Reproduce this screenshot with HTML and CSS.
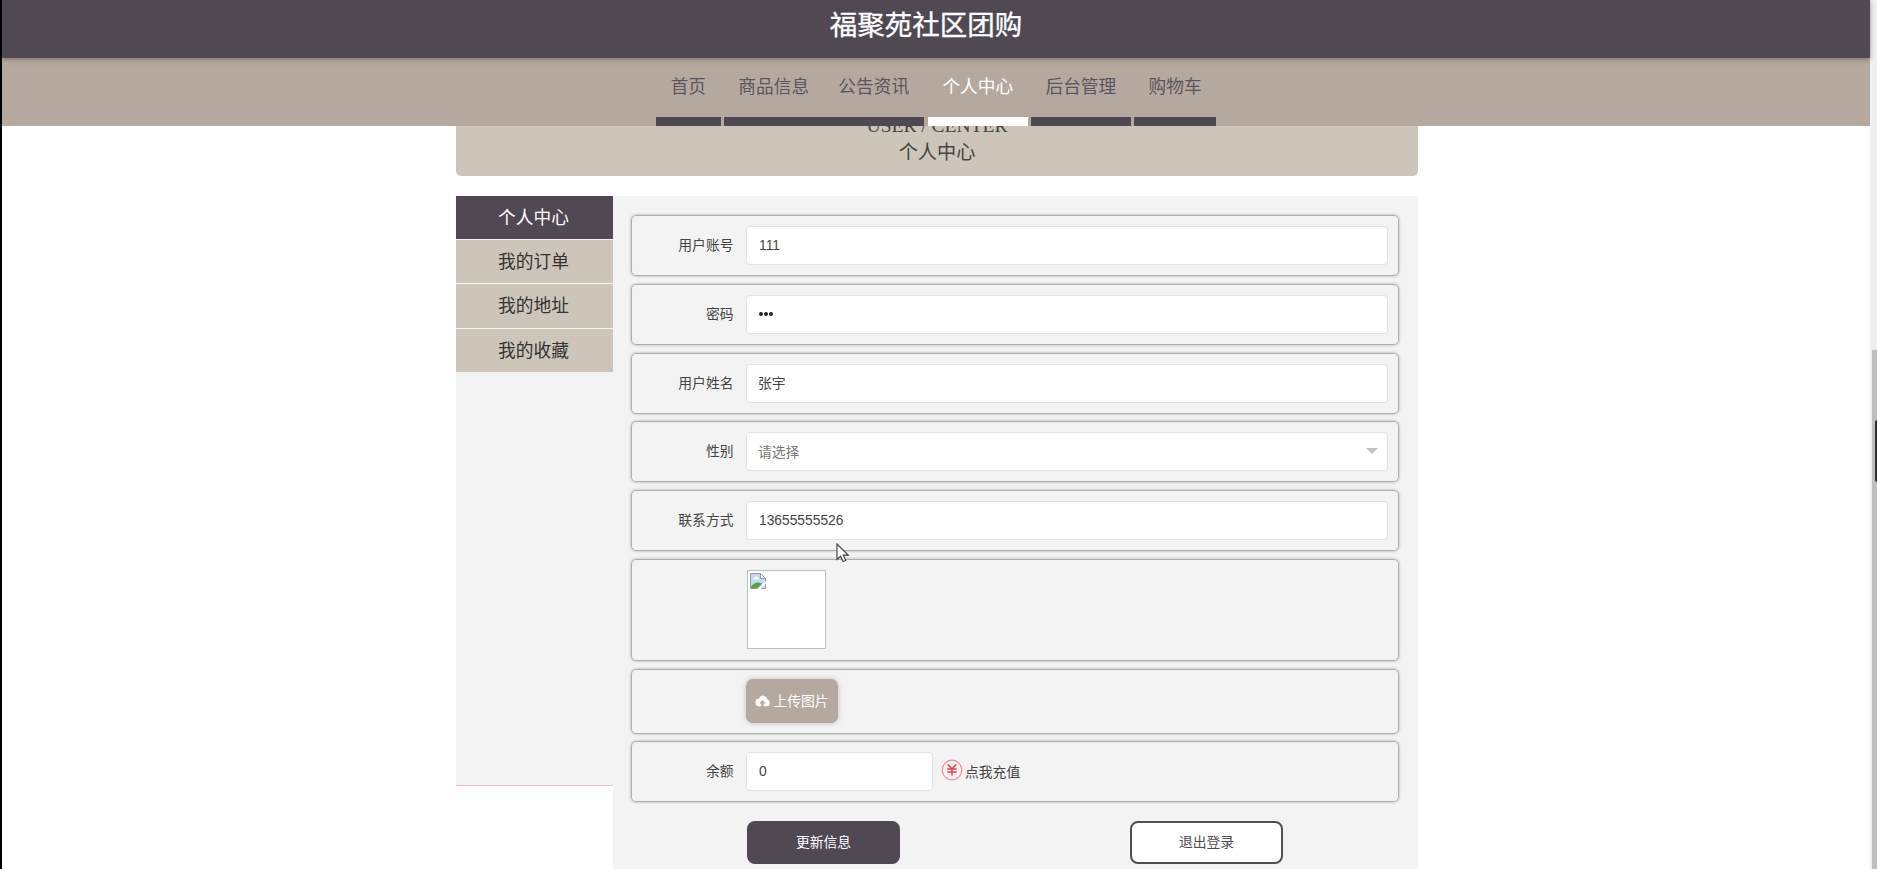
FILE: index.html
```html
<!DOCTYPE html>
<html lang="zh-CN">
<head>
<meta charset="utf-8">
<title>福聚苑社区团购</title>
<link rel="stylesheet" href="styles.css">
</head>
<body>
<div class="window">
  <div class="page">
    <header class="header">福聚苑社区团购</header>
    <nav class="nav">
      <a class="nav-item">首页</a>
      <a class="nav-item">商品信息</a>
      <a class="nav-item joined">公告资讯</a>
      <a class="nav-item active">个人中心</a>
      <a class="nav-item">后台管理</a>
      <a class="nav-item">购物车</a>
    </nav>
    <div class="banner">
      <div class="banner-en">USER / CENTER</div>
      <div class="banner-zh">个人中心</div>
    </div>
    <main class="center">
      <aside class="side">
        <a class="side-item current">个人中心</a>
        <a class="side-item">我的订单</a>
        <a class="side-item">我的地址</a>
        <a class="side-item">我的收藏</a>
      </aside>
      <section class="panel">
        <div class="row"><label class="label">用户账号</label><div class="field">111</div></div>
        <div class="row"><label class="label">密码</label><div class="field dots"><i></i><i></i><i></i></div></div>
        <div class="row"><label class="label">用户姓名</label><div class="field zh">张宇</div></div>
        <div class="row"><label class="label">性别</label><div class="field select zh">请选择<span class="caret"></span></div></div>
        <div class="row"><label class="label">联系方式</label><div class="field">13655555526</div></div>
        <div class="row row-photo"><span class="label"></span>
          <div class="photo">
            <svg width="16" height="16" viewBox="0 0 16 16">
              <path d="M.5.5h10l5 5v10H.5z" fill="#c4d7f5" stroke="#9a9a9a"/>
              <path d="M3 6.2C3 4.8 4.300 4.600 4.700 4.800 5.200 3.100 7.600 3.300 7.700 5 8.900 4.900 9 6.200 8.400 6.200z" fill="#fff"/>
              <path d="M1 15v-1.500C3 11 5.500 9.500 8 9.500c1.500 0 3 .5 4 1.500L8 15z" fill="#55a53c"/>
              <path d="M10.500.5v5h5z" fill="#fff" stroke="#9a9a9a"/>
              <path d="M16 8v2.500L10.500 16H7z" fill="#fff"/>
            </svg>
          </div>
        </div>
        <div class="row row-upload"><span class="label"></span>
          <button class="upload">
            <svg width="15" height="12" viewBox="0 0 15 12"><path d="M12.300 4.600A4.300 4.300 0 0 0 4 3.400 4 4 0 0 0 3.600 11.300H6.300V8.600H4.200L7.500 4.900l3.300 3.700H8.700v2.700h2.900a3.400 3.400 0 0 0 .7-6.700z" fill="#fff"/></svg>
            <span>上传图片</span>
          </button>
        </div>
        <div class="row"><label class="label">余额</label><div class="field short">0</div>
          <svg class="yen" width="22" height="22" viewBox="0 0 22 22" fill="none"><circle cx="11" cy="11" r="9.800" stroke="#f58c8c" stroke-width="1.200"/><path d="M6.800 5.500 11 10l4.200-4.500M6.300 10h9.400M6.300 13h9.400M11 10v6.500" stroke="#e8434d" stroke-width="1.600"/></svg>
          <span class="recharge">点我充值</span>
        </div>
        <div class="actions">
          <button class="btn primary">更新信息</button>
          <button class="btn">退出登录</button>
        </div>
      </section>
    </main>
  </div>
  <div class="scrollbar"><div class="thumb"><div class="handle"></div></div></div>
  <svg class="cursor" width="14" height="20" viewBox="0 0 14 20"><path d="M1 1v15.500l3.600-3.300 2.500 5.300 2.600-1.200-2.400-5.100h5z" fill="#fff" stroke="#444" stroke-width="1.200"/></svg>
</div>
</body>
</html>
```
FILE: styles.css
```css
* { box-sizing: border-box; }
body {
  margin: 0;
  background: #fff;
  color: #444;
  font-family: "Liberation Sans", "Noto Sans CJK SC", sans-serif;
  font-size: 13.8px;
}
.window {
  position: relative;
  display: flex;
  height: 869px;
  overflow: hidden;
  border-left: 2px solid #000;
}
.page {
  width: 1868px;
  display: flex;
  flex-direction: column;
  align-items: center;
}
.header {
  width: 100%;
  height: 58px;
  flex: none;
  padding: 0 20px 12px 0;
  display: flex;
  align-items: center;
  justify-content: center;
  background: #504954;
  color: #fff;
  font-size: 27.5px;
  -webkit-text-stroke: .3px #fff;
  z-index: 2;
  box-shadow: 0 1px 5px rgba(60, 45, 50, .5);
}
.nav {
  width: 100%;
  height: 68px;
  flex: none;
  padding-left: 654px;
  display: flex;
  gap: 3px;
  background: #b5a99f;
  z-index: 1;
}
.nav-item {
  height: 68px;
  padding: 0 14.65px 10px;
  border-bottom: 9px solid #504954;
  color: #5c5460;
  font-size: 17.7px;
  line-height: 59px;
  white-space: nowrap;
}
.joined { margin-left: -3px; margin-right: 1px; }
.active { color: #fff; border-color: #fff; }
.banner {
  width: 962px;
  height: 80px;
  flex: none;
  margin: -30px -2px 0 0;
  padding-top: 17px;
  background: #cdc5b9;
  border-radius: 5px;
  text-align: center;
}
.banner-en {
  height: 26px;
  line-height: 26px;
  font-family: "Liberation Serif", serif;
  font-size: 19.5px;
}
.banner-zh {
  height: 28px;
  line-height: 28px;
  font-size: 19.2px;
}
.center {
  width: 962px;
  margin: 20px -2px 0 0;
  display: flex;
  align-items: flex-start;
}
.side {
  width: 157px;
  height: 590px;
  display: flex;
  flex-direction: column;
  gap: 1px;
  background: #f3f3f3;
  border-bottom: 1px solid #efc0c1;
}
.side-item {
  height: 43.2px;
  padding-right: 2px;
  background: #cdc5b9;
  color: #333;
  font-size: 17.7px;
  line-height: 44px;
  text-align: center;
}
.current { background: #504954; color: #fff; }
.panel {
  width: 805px;
  height: 673px;
  padding: 19px 19px 0 17.500px;
  display: flex;
  flex-direction: column;
  gap: 7.75px;
  background: #f3f3f3;
}
.row {
  height: 61px;
  flex: none;
  padding: 0 10px;
  display: flex;
  align-items: center;
  border: 1px solid #aeadb0;
  border-radius: 5px;
  box-shadow: 0 0 3px rgba(0, 0, 0, .3);
}
.row-photo { height: 102px; }
.row-upload { height: 65px; }
.label { width: 92px; flex: none; margin-right: 12.500px; padding-bottom: 3px; text-align: right; }
.field {
  flex: 1;
  height: 39px;
  padding: 0 12px;
  display: flex;
  align-items: center;
  background: #fff;
  border: 1px solid #e2e2e4;
  border-radius: 4px;
}
.zh { padding-left: 11px; padding-bottom: 2px; }
.dots { gap: 1px; }
.dots i { width: 4px; height: 4px; border-radius: 50%; background: #222; }
.select { color: #777; justify-content: space-between; padding-right: 9px; }
.caret {
  border: 6px solid transparent;
  border-top-color: #c2c2c2;
  border-bottom: 0;
}
.short { flex: none; width: 187px; }
.yen { margin: -3px 2px 0 8px; }
.recharge { margin-top: -1px; }
.photo {
  width: 79px;
  height: 79px;
  padding: 2px;
  margin-left: 1px;
  display: flex;
  align-items: flex-start;
  background: #fff;
  border: 1px solid #bfbfbf;
}
button { font-family: inherit; font-size: 13.8px; padding: 0; }
.upload {
  width: 92px;
  height: 44px;
  display: flex;
  align-items: center;
  justify-content: center;
  gap: 3px;
  background: #b5a99f;
  color: #fff;
  border: 0;
  border-radius: 7px;
  box-shadow: 0 0 5px rgba(170, 125, 110, .5);
}
.upload span { padding-bottom: 3px; }
.actions {
  margin-top: 11px;
  padding: 0 116px 0 116.500px;
  display: flex;
  justify-content: space-between;
}
.btn {
  width: 153px;
  height: 43px;
  padding-bottom: 4px;
  background: #fff;
  color: #504954;
  border: 2px solid #504f53;
  border-radius: 8px;
}
.primary { background: #504954; color: #fff; border-color: #504954; }
.scrollbar { flex: 1; padding: 350px 0 0 2px; background: #f0f0f0; }
.thumb { height: 519px; padding: 70px 0 0 3px; background: #bfbfbf; }
.handle { height: 62px; background: #2d2d2d; border-radius: 2px 0 0 2px; }
.cursor { position: absolute; left: 834px; top: 543px; }
```
